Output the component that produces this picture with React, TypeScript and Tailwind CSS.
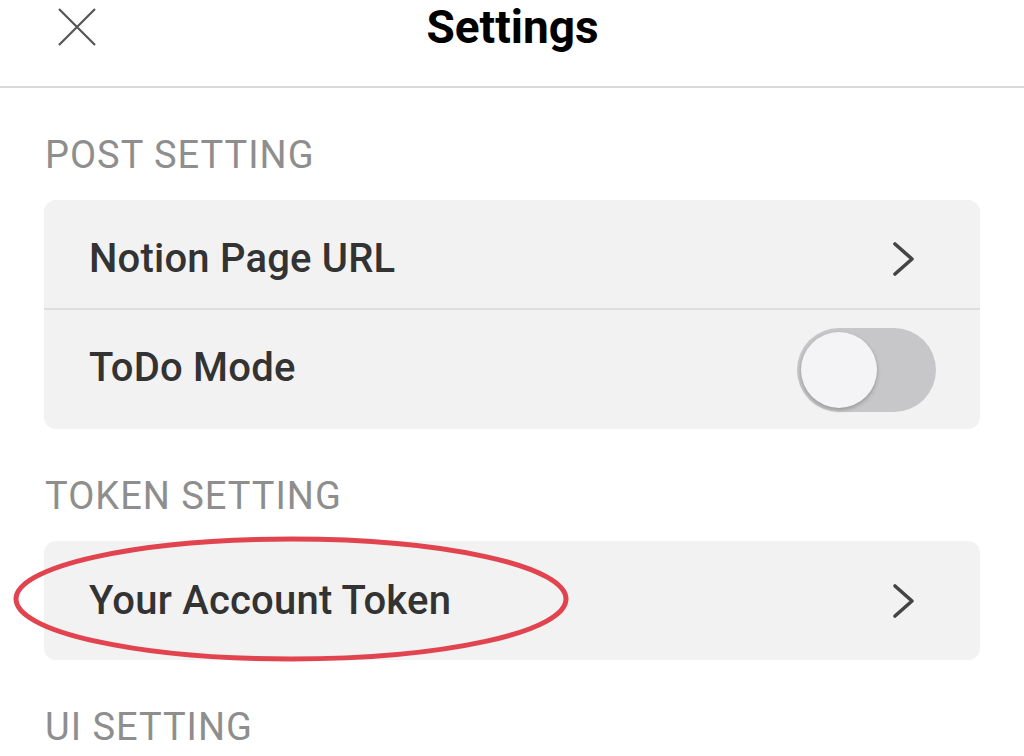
function SectionLabel({ text }: { text: string }) {
  return (
    <div className="pt-[47px] pb-[25px] pl-[1px] text-[38px] leading-[40px] text-[#8e8e8e] tracking-[1px]">
      {text}
    </div>
  );
}

function Chevron() {
  return (
    <svg width="26" height="36" viewBox="0 0 26 36" className="shrink-0">
      <path d="M4 3 L21 18 L4 33" stroke="#444444" strokeWidth="3.6" strokeLinecap="round" strokeLinejoin="round" fill="none" />
    </svg>
  );
}

function Toggle() {
  return (
    <div className="w-[139px] h-[84px] rounded-full bg-[#c7c7c9] p-[4px] flex items-center">
      <div className="w-[76px] h-[76px] rounded-full bg-[#f4f4f6] shadow-[0_2px_4px_rgba(0,0,0,0.25)]" />
    </div>
  );
}

export default function App() {
  return (
    <div className="w-[1024px] h-[756px] overflow-hidden bg-white" style={{ fontFamily: 'Roboto, "Liberation Sans", sans-serif' }}>
      <header className="relative h-[88px] border-b-2 border-[#dadada]">
        <svg className="absolute left-[58px] top-[8px]" width="38" height="38" viewBox="0 0 38 38">
          <path d="M1 1 L37 37 M37 1 L1 37" stroke="#555555" strokeWidth="2.2" fill="none" />
        </svg>
        <h1 className="text-center text-[46px] leading-[54px] font-bold text-black pl-[1px]">Settings</h1>
      </header>

      <main className="px-[44px]">
        <SectionLabel text="POST SETTING" />
        <div className="rounded-[12px] bg-[#f2f2f2]">
          <div className="flex items-center justify-between pl-[45px] pr-[63px] pt-[9px] h-[110px] border-b-2 border-[#dedede]">
            <span className="text-[40px] font-medium text-[#333333] tracking-[0.2px]">Notion Page URL</span>
            <Chevron />
          </div>
          <div className="flex items-center justify-between pl-[45px] pr-[44px] h-[119px]">
            <span className="text-[40px] font-medium text-[#333333] tracking-[0.2px] -mt-[3px]">ToDo Mode</span>
            <Toggle />
          </div>
        </div>

        <SectionLabel text="TOKEN SETTING" />
        <div className="relative rounded-[12px] bg-[#f2f2f2]">
          <div className="flex items-center justify-between pl-[45px] pr-[63px] h-[119px]">
            <span className="text-[40px] font-medium text-[#333333] tracking-[0.2px]">Your Account Token</span>
            <Chevron />
          </div>
          <svg className="absolute left-[-31px] top-[-6px] pointer-events-none" width="556" height="128" viewBox="0 0 556 128">
            <ellipse cx="278" cy="64" rx="275" ry="60" stroke="#e1444f" strokeWidth="5" fill="none" />
          </svg>
        </div>

        <SectionLabel text="UI SETTING" />
      </main>
    </div>
  );
}
